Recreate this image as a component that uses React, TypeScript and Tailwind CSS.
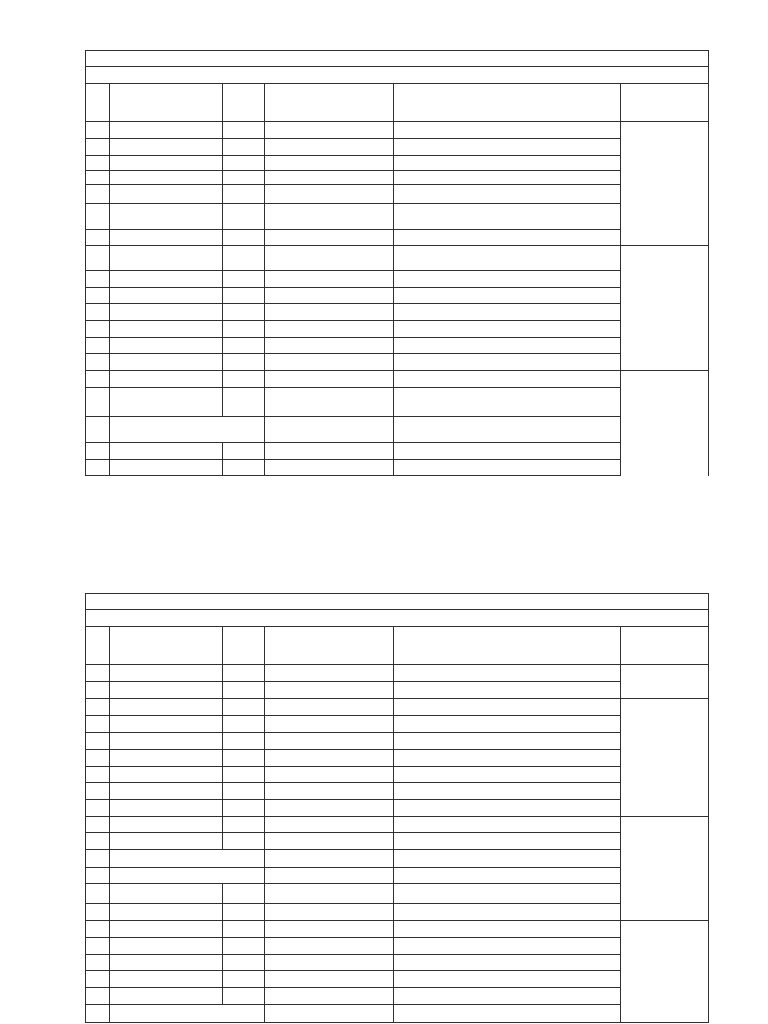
const H: Record<number, string> = {
  14: "h-[14px]",
  15: "h-[15px]",
  16: "h-[16px]",
  17: "h-[17px]",
  18: "h-[18px]",
  19: "h-[19px]",
  20: "h-[20px]",
  25: "h-[25px]",
  26: "h-[26px]",
  29: "h-[29px]",
};

const SPAN: Record<number, string> = {
  2: "row-span-2",
  5: "row-span-5",
  6: "row-span-6",
  7: "row-span-7",
};

const cols = "grid grid-cols-[24px_113px_42px_129px_227px_88px]";
const cell = "border-r border-b border-[#2f2f2f]";

type Sheet = {
  rows: number[];
  groups: number[];
  merged: number[];
  openBottom?: boolean;
};

const sheets: Sheet[] = [
  {
    rows: [17, 17, 15, 14, 19, 26, 16, 25, 17, 16, 17, 17, 16, 17, 17, 29, 26, 17, 16],
    groups: [7, 7, 5],
    merged: [16],
    openBottom: true,
  },
  {
    rows: [17, 17, 17, 17, 17, 17, 16, 17, 17, 16, 17, 18, 16, 20, 17, 17, 17, 16, 17, 17, 18],
    groups: [2, 7, 6, 6],
    merged: [11, 12, 20],
  },
];

function BlankTable({ sheet }: { sheet: Sheet }) {
  // which row starts a new group in the last column
  const starts: Record<number, number> = {};
  let at = 0;
  sheet.groups.forEach((g) => {
    starts[at] = g;
    at += g;
  });
  const lastStart = at - sheet.groups[sheet.groups.length - 1];

  return (
    <div className="w-[624px] border-t border-l border-[#2f2f2f]">
      <div className={`h-[16px] ${cell}`} />
      <div className={`h-[17px] ${cell}`} />
      <div className={cols}>
        {[0, 1, 2, 3, 4, 5].map((i) => (
          <div key={i} className={`h-[38px] ${cell}`} />
        ))}
      </div>
      <div className={cols}>
        {sheet.rows.map((h, i) => {
          const merged = sheet.merged.includes(i);
          const out = [
            <div key={`a${i}`} className={`${H[h]} ${cell}`} />,
          ];
          if (merged) {
            out.push(<div key={`b${i}`} className={`${H[h]} col-span-2 ${cell}`} />);
          } else {
            out.push(<div key={`b${i}`} className={`${H[h]} ${cell}`} />);
            out.push(<div key={`c${i}`} className={`${H[h]} ${cell}`} />);
          }
          out.push(<div key={`d${i}`} className={`${H[h]} ${cell}`} />);
          out.push(<div key={`e${i}`} className={`${H[h]} ${cell}`} />);
          if (starts[i] !== undefined) {
            const open = sheet.openBottom && i === lastStart;
            out.push(
              <div
                key={`f${i}`}
                className={`${SPAN[starts[i]]} ${
                  open ? "border-r border-[#2f2f2f]" : cell
                }`}
              />
            );
          }
          return out;
        })}
      </div>
    </div>
  );
}

export default function App() {
  return (
    <div className="min-h-[1024px] w-[768px] bg-white">
      <div className="pl-[85px] pt-[50px]">
        <BlankTable sheet={sheets[0]} />
      </div>
      <div className="pl-[85px] pt-[117px]">
        <BlankTable sheet={sheets[1]} />
      </div>
    </div>
  );
}
